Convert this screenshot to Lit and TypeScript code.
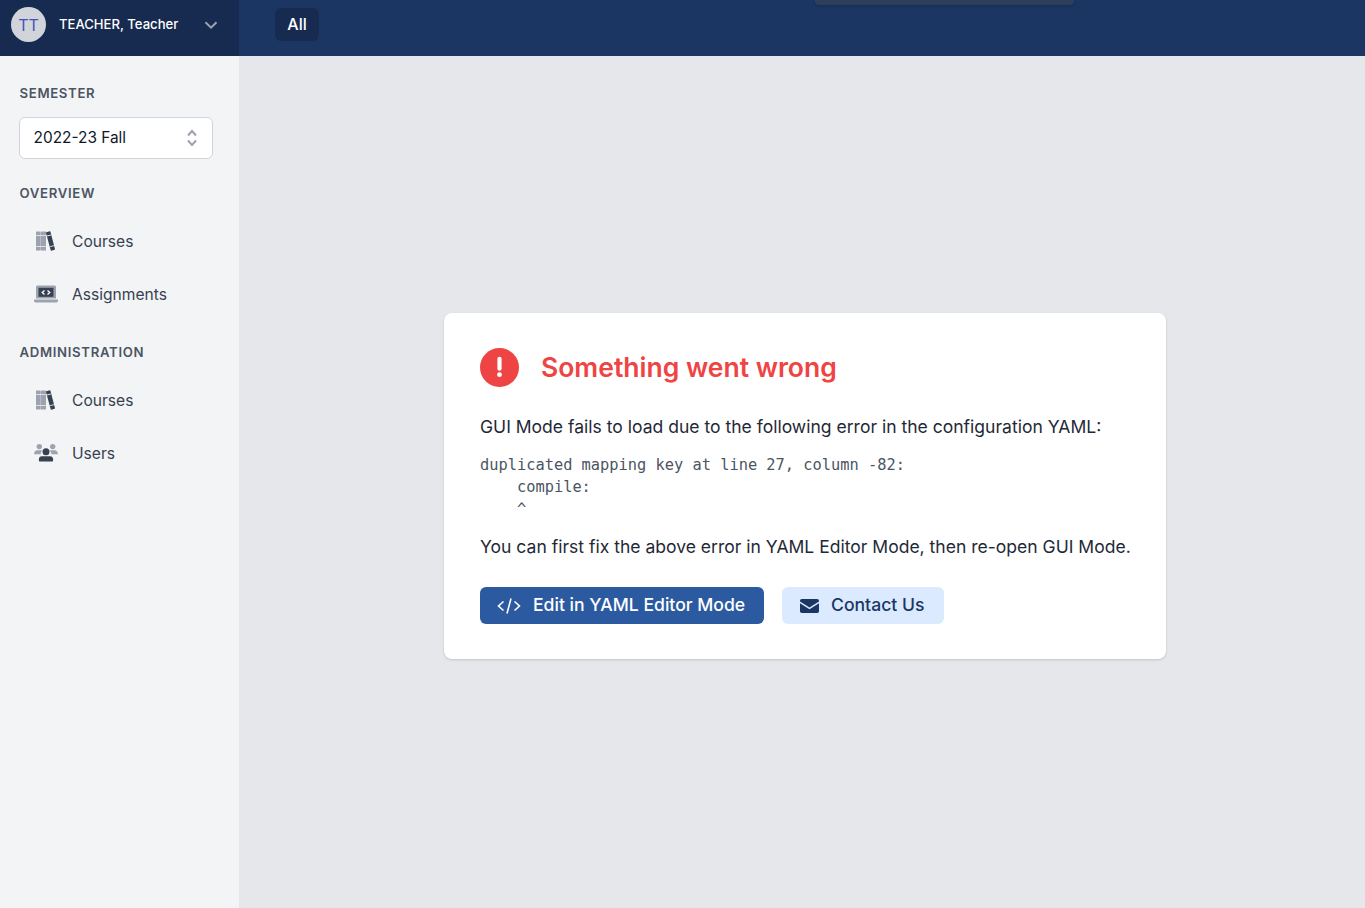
import { LitElement, html, css, svg } from "lit";
import { customElement } from "lit/decorators.js";

const books = svg`<svg class="ni" viewBox="0 0 24 20" width="24" height="20">
  <path fill="#9ca3af" d="M2.500 .5h3.700a.5.5 0 0 1 .5.5v18a.5.5 0 0 1-.5.5H2.500a.5.5 0 0 1-.5-.5V1a.5.5 0 0 1 .5-.5z"/>
  <path fill="#9ca3af" d="M7.500 .5h4a.5.5 0 0 1 .5.5v18a.5.5 0 0 1-.5.5h-4a.5.5 0 0 1-.5-.5V1a.5.5 0 0 1 .5-.5z"/>
  <path fill="#f3f4f6" d="M2 4.200h10v.9H2zM2 14.900h10v.9H2z"/>
  <path fill="#374151" d="M12.400 1.300l3.300-1a.6.6 0 0 1 .75.4l4.500 17.200a.6.6 0 0 1-.4.75l-3.100 1a.6.6 0 0 1-.75-.4L12 2.050a.6.6 0 0 1 .4-.75z"/>
  <path fill="#f3f4f6" d="M13 4.600l4-1.100.2.800-4 1.100zM16 15.300l4-1.100.2.800-4 1.100z"/>
</svg>`;
const laptop = svg`<svg class="ni" viewBox="0 0 24 20" width="24" height="20">
  <path fill="#9ca3af" d="M3.500 1.500h17a1.500 1.500 0 0 1 1.500 1.500v11.500H2V3a1.500 1.500 0 0 1 1.500-1.500z"/>
  <path fill="#374151" d="M4.500 3.800h15v9h-15z"/>
  <path fill="none" stroke="#fff" stroke-width="1.300" d="M10.500 6.500l-2.300 2 2.300 2M13.500 6.500l2.300 2-2.300 2"/>
  <path fill="#9ca3af" d="M0 15.500h24v1.300a1.700 1.700 0 0 1-1.700 1.700H1.700A1.700 1.700 0 0 1 0 16.800z"/>
</svg>`;
const users = svg`<svg class="ni" viewBox="0 0 24 20" width="24" height="20">
  <circle cx="5.300" cy="3.600" r="2.700" fill="#9ca3af"/><circle cx="18.700" cy="3.600" r="2.700" fill="#9ca3af"/>
  <path fill="#9ca3af" d="M0 11.300c0-2.200 1.400-4 3.300-4h3.500c.5 0 1 .1 1.400.3a4.800 4.800 0 0 0-1.600 3.700H0zM24 11.300c0-2.200-1.400-4-3.300-4h-3.500c-.5 0-1 .1-1.400.3a4.800 4.800 0 0 1 1.600 3.700H24z"/>
  <circle cx="12" cy="8.800" r="3.500" fill="#374151"/>
  <path fill="#374151" d="M7.800 13.200h8.400c1.600 0 2.900 1.300 2.900 2.900v1.300c0 .6-.5 1.100-1.100 1.100H6c-.6 0-1.100-.5-1.100-1.100v-1.300c0-1.600 1.300-2.900 2.900-2.900z"/>
</svg>`;

@customElement("app-root")
export class AppRoot extends LitElement {
  static styles = css`
    :host { display: block; width: 1365px; height: 908px; font-family: Inter, "Liberation Sans", sans-serif; color: #1f2937; overflow: hidden; }
    * { box-sizing: border-box; }
    .top { height: 56px; display: flex; background: #1b3663; position: relative; }
    .user { width: 239px; height: 56px; background: #172b51; display: flex; align-items: center; padding: 0 0 7px 11px; color: #fff; }
    .avatar { width: 35px; height: 35px; border-radius: 50%; background: #d1d5db; color: #4453b8; font-size: 16px; display: flex; align-items: center; justify-content: center; flex: none; }
    .uname { margin: 0 0 1px 13px; font-size: 13.1px; font-weight: 500; width: 145px; white-space: nowrap; }
    .chev { flex: none; display: block; }
    .tabs { padding: 8px 0 0 36px; }
    .tab { height: 33px; width: 44px; border-radius: 6px; background: #172b51; color: #fff; font-size: 16px; font-weight: 500; display: flex; align-items: center; justify-content: center; padding-bottom: 2px; }
    .peek { position: absolute; left: 815px; top: 0; width: 259px; height: 5px; background: #2d3f5c; border-radius: 0 0 4px 4px; box-shadow: 0 1px 3px rgba(0,0,0,.2); }
    .body { display: flex; height: 852px; }
    aside { width: 239px; flex: none; background: #f3f4f6; padding: 29px 0 0 19px; }
    .label { font-size: 13.2px; font-weight: 600; letter-spacing: .66px; color: #4b5563; line-height: 16px; padding-left: .5px; }
    .select { margin-top: 16px; width: 194px; height: 42px; background: #fff; border: 1px solid #d1d5db; border-radius: 6px; display: flex; align-items: center; justify-content: space-between; padding: 0 14px 1px 13.6px; font-size: 15.4px; color: #111827; }
    .ov { margin-top: 26px; }
    .admin { margin-top: 30px; }
    nav { margin-top: 20px; display: flex; flex-direction: column; gap: 13px; }
    .item { height: 40px; display: flex; align-items: center; padding-left: 15px; gap: 14px; font-size: 15.6px; color: #374151; }
    .ni { flex: none; display: block; }
    main { flex: 1; background: #e5e7eb; display: flex; justify-content: center; padding: 257px 0 0 6px; }
    .card { width: 722px; height: 346px; background: #fff; border-radius: 8px; padding: 35px 35px 0 36px; box-shadow: 0 1px 3px rgba(0,0,0,.1), 0 1px 2px rgba(0,0,0,.06); }
    .head { display: flex; align-items: center; gap: 22px; height: 39px; }
    h1 { margin: 0; font-size: 26.5px; font-weight: 600; color: #ef4444; line-height: 39px; white-space: nowrap; }
    p { margin: 0; font-size: 17.55px; line-height: 28px; color: #1f2937; white-space: nowrap; }
    .p1 { margin-top: 26px; }
    pre { margin: 13px 0 0; font-family: "DejaVu Sans Mono", monospace; font-size: 15.35px; line-height: 22px; color: #4b5563; height: 66px; overflow: visible; }
    .p2 { margin-top: 13px; }
    .btns { margin-top: 26px; display: flex; gap: 18px; }
    .btn { height: 37px; border-radius: 6px; display: flex; align-items: center; font-size: 17.6px; font-weight: 500; white-space: nowrap; }
    .btn span { margin-bottom: 2px; }
    .primary { width: 284px; background: #2c5aa0; color: #fff; padding-left: 17px; gap: 12px; }
    .secondary { width: 162px; background: #dbeafe; color: #1b3663; padding-left: 18px; gap: 12px; }
  `;

  render() {
    return html`
      <div class="top">
        <div class="user">
          <div class="avatar">TT</div>
          <div class="uname">TEACHER, Teacher</div>
          <svg class="chev" width="14" height="14" viewBox="0 0 14 14"><path d="M1.500 4.300L7 9.700l5.500-5.400" fill="none" stroke="#9ca3af" stroke-width="2"/></svg>
        </div>
        <div class="tabs"><div class="tab">All</div></div>
        <div class="peek"></div>
      </div>
      <div class="body">
        <aside>
          <div class="label">SEMESTER</div>
          <div class="select">
            <span>2022-23 Fall</span>
            <svg width="12" height="20" viewBox="0 0 12 20"><path d="M2 7.500l4-4.500 4 4.500M2 12.500l4 4.500 4-4.500" fill="none" stroke="#9ca3af" stroke-width="2"/></svg>
          </div>
          <div class="label ov">OVERVIEW</div>
          <nav>
            <div class="item">${books}<span>Courses</span></div>
            <div class="item">${laptop}<span>Assignments</span></div>
          </nav>
          <div class="label admin">ADMINISTRATION</div>
          <nav>
            <div class="item">${books}<span>Courses</span></div>
            <div class="item">${users}<span>Users</span></div>
          </nav>
        </aside>
        <main>
          <div class="card">
            <div class="head">
              <svg width="39" height="39" viewBox="0 0 39 39"><circle cx="19.500" cy="19.500" r="19.500" fill="#ef4444"/><rect x="17.400" y="8.700" width="4.200" height="14" rx="2" fill="#fff"/><circle cx="19.500" cy="26.700" r="2.400" fill="#fff"/></svg>
              <h1>Something went wrong</h1>
            </div>
            <p class="p1">GUI Mode fails to load due to the following error in the configuration YAML:</p>
            <pre>duplicated mapping key at line 27, column -82:
    compile:
    ^</pre>
            <p class="p2">You can first fix the above error in YAML Editor Mode, then re-open GUI Mode.</p>
            <div class="btns">
              <div class="btn primary">
                <svg width="24" height="18" viewBox="0 0 24 18"><path d="M6.500 4.500L1.500 9l5 4.500M17.500 4.500l5 4.500-5 4.500M14 1.500L10 16.500" fill="none" stroke="#fff" stroke-width="1.600"/></svg>
                <span>Edit in YAML Editor Mode</span>
              </div>
              <div class="btn secondary">
                <svg width="19" height="14" viewBox="0 0 19 14"><path fill="#1b3663" d="M1.800 0h15.400A1.800 1.800 0 0 1 19 1.800v.6l-9.500 6-9.500-6v-.6A1.800 1.800 0 0 1 1.800 0z"/><path fill="#1b3663" d="M0 4.300l9.500 6 9.500-6v7.900a1.800 1.800 0 0 1-1.800 1.800H1.800A1.800 1.800 0 0 1 0 12.200z"/></svg>
                <span>Contact Us</span>
              </div>
            </div>
          </div>
        </main>
      </div>
    `;
  }
}
